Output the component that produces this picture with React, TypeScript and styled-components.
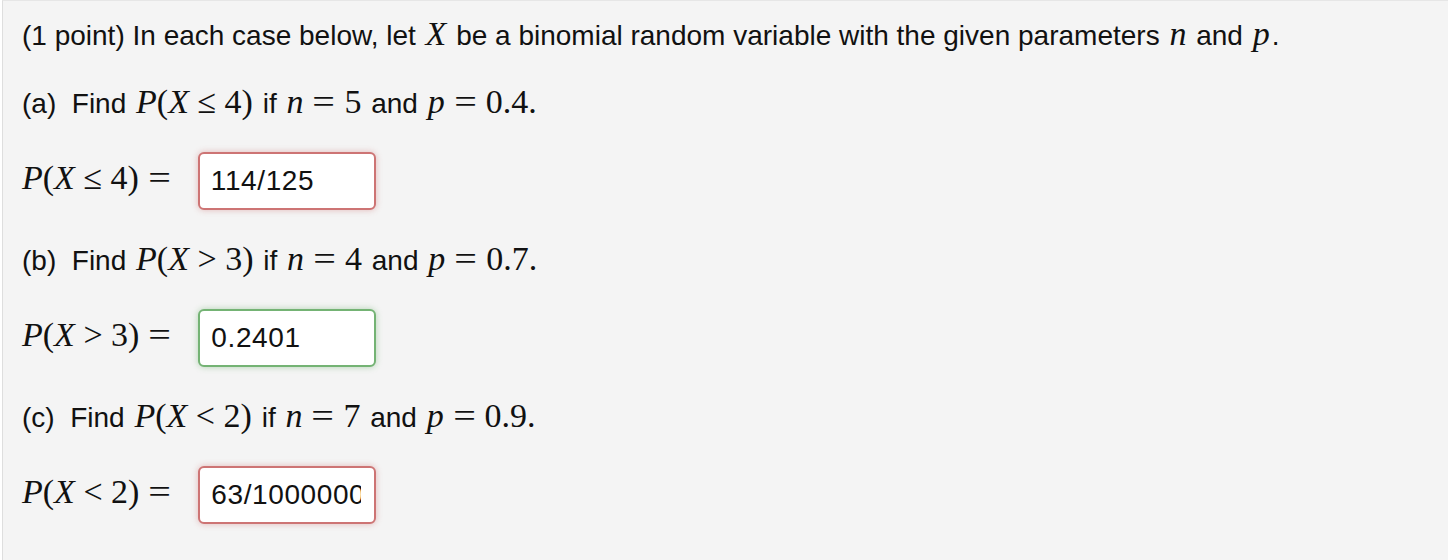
import React from "react";
import styled, { createGlobalStyle } from "styled-components";

const Global = createGlobalStyle`
  html, body { margin: 0; padding: 0; background: #ffffff; }
  body { font-family: "Liberation Sans", Arial, sans-serif; }
`;

const Well = styled.div`
  box-sizing: border-box;
  width: 1448px;
  height: 560px;
  margin-left: 2px;
  background: #f4f4f4;
  border-left: 1px solid #dedede;
  border-top: 1px solid #e6e6e6;
  padding: 13px 20px 0 19px;
  color: #111;
  font-size: 28px;
`;

const Para = styled.div<{ $mt: number }>`
  margin-top: ${(p) => p.$mt}px;
  line-height: 40px;
  height: 40px;
  white-space: nowrap;
`;

const Row = styled.div<{ $mt: number }>`
  margin-top: ${(p) => p.$mt}px;
  display: flex;
  align-items: center;
  height: 58px;
  gap: 18px;
`;

const MathSpan = styled.span`
  font-family: "Liberation Serif", "Times New Roman", serif;
  font-size: 34px;
  margin: 0 2px;
`;

const Label = styled(MathSpan)`
  margin: 0;
  line-height: 40px;
  padding-bottom: 6px;
`;

const I = styled.i`
  font-style: italic;
`;

const Rel = styled.span`
  padding: 0 0.25em;
`;

const Eq = styled.span`
  display: inline-block;
  margin: 0 0.32em;
  transform: scaleX(1.18);
`;

const Answer = styled.input<{ $ok: boolean }>`
  box-sizing: border-box;
  width: 178px;
  height: 58px;
  padding: 0 13px 0 11px;
  border-radius: 6px;
  background: #fff;
  font-family: "Liberation Sans", Arial, sans-serif;
  font-size: 28px;
  letter-spacing: 0.6px;
  color: #111;
  outline: none;
  border: 2px solid ${(p) => (p.$ok ? "#74b374" : "#cd7474")};
  box-shadow: 0 0 6px ${(p) =>
    p.$ok ? "rgba(100,170,100,0.45)" : "rgba(205,110,110,0.45)"};
`;

type Q = {
  tag: string;
  rel: string;
  k: string;
  n: string;
  p: string;
  ans: string;
  ok: boolean;
};

const qs: Q[] = [
  { tag: "(a)", rel: "≤", k: "4", n: "5", p: "0.4", ans: "114/125", ok: false },
  { tag: "(b)", rel: ">", k: "3", n: "4", p: "0.7", ans: "0.2401", ok: true },
  { tag: "(c)", rel: "<", k: "2", n: "7", p: "0.9", ans: "63/1000000", ok: false },
];

const Prob = ({ rel, k }: { rel: string; k: string }) => (
  <>
    <I>P</I>(<I>X</I>
    <Rel>{rel}</Rel>
    {k})
  </>
);

export default function App() {
  return (
    <>
      <Global />
      <Well>
        <Para $mt={0}>
          (1 point) In each case below, let <MathSpan><I>X</I></MathSpan> be a
          binomial random variable with the given parameters{" "}
          <MathSpan><I>n</I></MathSpan> and <MathSpan><I>p</I></MathSpan>.
        </Para>
        {qs.map((q, i) => (
          <React.Fragment key={q.tag}>
            <Para $mt={i === 0 ? 28 : 29}>
              {q.tag}&nbsp; Find{" "}
              <MathSpan>
                <Prob rel={q.rel} k={q.k} />
              </MathSpan>{" "}
              if{" "}
              <MathSpan>
                <I>n</I>
                <Eq>=</Eq>
                {q.n}
              </MathSpan>{" "}
              and{" "}
              <MathSpan>
                <I>p</I>
                <Eq>=</Eq>
                {q.p}.
              </MathSpan>
            </Para>
            <Row $mt={30}>
              <Label>
                <Prob rel={q.rel} k={q.k} />
                <Eq>=</Eq>
              </Label>
              <Answer $ok={q.ok} readOnly value={q.ans} />
            </Row>
          </React.Fragment>
        ))}
      </Well>
    </>
  );
}
